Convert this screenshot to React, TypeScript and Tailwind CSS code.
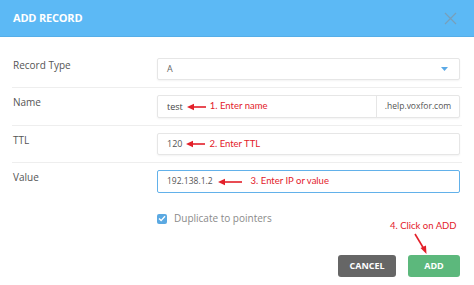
import { ReactNode } from 'react'

const red = 'text-[9.5px] text-[#e3202a] font-[family-name:Lato]'

function LeftArrow({ w = 20 }: { w?: number }) {
  return (
    <svg width={w} height="8" viewBox={`0 0 ${w} 8`} className="shrink-0">
      <line x1="5" y1="4" x2={w} y2="4" stroke="#e3202a" strokeWidth="1.6" />
      <polygon points="0,4 7,0.8 7,7.2" fill="#e3202a" />
    </svg>
  )
}

function Row({ label, children, last }: { label: string; children: ReactNode; last?: boolean }) {
  return (
    <div className={`flex py-[7px] ${last ? '' : 'border-b border-[#eeeeee]'}`}>
      <div className="w-[145px] pl-[1px] pt-[1px] text-[10px] leading-[13px] text-[#555]">{label}</div>
      <div className="flex-1 pr-[2px]">{children}</div>
    </div>
  )
}

export default function App() {
  return (
    <div className="relative w-[474px] h-[285px] bg-white overflow-hidden font-[family-name:'Open_Sans']">
      {/* Header */}
      <div className="h-[37px] bg-[#5cb9f5] border-b border-[#55aee8] flex items-center justify-between pl-[13px] pr-[17px]">
        <span className="text-white font-bold text-[11px] tracking-[-0.2px]">ADD RECORD</span>
        <svg width="13" height="13" viewBox="0 0 13 13">
          <path d="M1 1 L12 12 M12 1 L1 12" stroke="#779fba" strokeWidth="1.2" />
        </svg>
      </div>

      {/* Form */}
      <div className="px-[12px] pt-[14px]">
        <Row label="Record Type">
          <div className="h-[22px] border border-[#e6e6e6] rounded-[2px] shadow-[0_1px_2px_rgba(0,0,0,0.05)] flex items-center justify-between pl-[9px] pr-[11px]">
            <span className="text-[9px] text-[#666]">A</span>
            <svg width="7" height="4" viewBox="0 0 7 4">
              <polygon points="0,0 7,0 3.5,4" fill="#5aa9e6" />
            </svg>
          </div>
        </Row>
        <Row label="Name">
          <div className="h-[23px] border border-[#e6e6e6] rounded-[2px] shadow-[0_1px_2px_rgba(0,0,0,0.05)] flex">
            <div className="flex-1 flex items-center pl-[9px] gap-[4px]">
              <span className="text-[9px] text-[#444]">test</span>
              <LeftArrow w={19} />
              <span className={red}>1. Enter name</span>
            </div>
            <div className="w-[83px] border-l border-[#e6e6e6] flex items-center justify-center text-[8.5px] text-[#555]">.help.voxfor.com</div>
          </div>
        </Row>
        <Row label="TTL">
          <div className="h-[22px] border border-[#e6e6e6] rounded-[2px] shadow-[0_1px_2px_rgba(0,0,0,0.05)] flex items-center pl-[9px] gap-[4px]">
            <span className="text-[9px] text-[#555]">120</span>
            <LeftArrow w={19} />
            <span className={red}>2. Enter TTL</span>
          </div>
        </Row>
        <Row label="Value" last>
          <div className="h-[23px] border border-[#62b1ea] rounded-[2px] flex items-center pl-[9px] gap-[5px]">
            <span className="text-[8.5px] text-[#555]">192.138.1.2</span>
            <LeftArrow w={24} />
            <span className={`${red} ml-[4px]`}>3. Enter IP or value</span>
          </div>
        </Row>

        <div className="flex items-center pl-[145px] pt-[11px] gap-[7px]">
          <div className="w-[10px] h-[10px] rounded-[2px] bg-[#5ba9e2] flex items-center justify-center">
            <svg width="8" height="7" viewBox="0 0 8 7">
              <path d="M1 3.6 L3.1 5.6 L7 1.2" stroke="white" strokeWidth="1.4" fill="none" />
            </svg>
          </div>
          <span className="text-[10px] text-[#8a8a8a]">Duplicate to pointers</span>
        </div>
      </div>

      {/* Annotation */}
      <span className={`absolute left-[390px] top-[219px] ${red}`}>4. Click on ADD</span>
      <svg className="absolute left-[412px] top-[233px]" width="18" height="22" viewBox="0 0 18 22">
        <line x1="3" y1="1" x2="12" y2="16" stroke="#e3202a" strokeWidth="1.6" />
        <polygon points="14.5,21 8.5,15 14,12.5" fill="#e3202a" />
      </svg>

      {/* Footer */}
      <div className="absolute left-0 right-0 top-[255px] flex justify-end gap-[12px] pr-[14px]">
        <button className="w-[58px] h-[22px] rounded-[3px] bg-[#666666] text-white text-[9px] font-bold">CANCEL</button>
        <button className="w-[52px] h-[22px] rounded-[3px] bg-[#5cb87c] text-white text-[9px] font-bold">ADD</button>
      </div>
    </div>
  )
}
